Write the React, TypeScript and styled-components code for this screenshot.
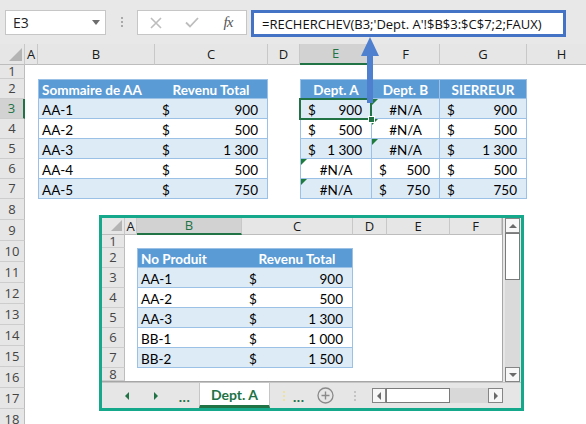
import { Fragment } from 'react';
import styled, { createGlobalStyle } from 'styled-components';

type Align = 'left' | 'center';
type Kind = 'head' | 'band' | 'plain';

interface CellSpec {
    value: string;
    kind: Kind;
    align: Align;
    first: boolean;
    last: boolean;
    sep: boolean;
    top: boolean;
    err?: boolean;
    selected?: boolean;
}

type CellMap = Record<string, CellSpec>;

const GREEN = '#217346';
const LINE = '1px solid #9bc2e6';
const UI_FONT = '"Open Sans", "Noto Sans", sans-serif';
const CELL_FONT = 'Lato, "Liberation Sans", sans-serif';

const GlobalStyle = createGlobalStyle`
html, body {
    margin: 0;
    padding: 0;
    background: #fff;
}
body {
    font-family: ${CELL_FONT};
}
`;

function buildTable(cols: string[], top: number, data: string[][], headAlign: Align[], sep: boolean): CellMap {
    const map: CellMap = {};
    data.forEach((row, i) => {
        row.forEach((value, j) => {
            map[cols[j] + (top + i)] = {
                value,
                kind: i === 0 ? 'head' : i % 2 === 1 ? 'band' : 'plain',
                align: i === 0 ? headAlign[j] : value === '#N/A' ? 'center' : 'left',
                first: j === 0,
                last: j === row.length - 1,
                sep,
                top: i === 0
            };
        });
    });
    return map;
}

const mainCells: CellMap = {
    ...buildTable(['B', 'C'], 2, [
        ['Sommaire de AA', 'Revenu Total'],
        ['AA-1', '$900'],
        ['AA-2', '$500'],
        ['AA-3', '$1 300'],
        ['AA-4', '$500'],
        ['AA-5', '$750']
    ], ['left', 'center'], false),
    ...buildTable(['E', 'F', 'G'], 2, [
        ['Dept. A', 'Dept. B', 'SIERREUR'],
        ['$900', '#N/A', '$900'],
        ['$500', '#N/A', '$500'],
        ['$1 300', '#N/A', '$1 300'],
        ['#N/A', '$500', '$500'],
        ['#N/A', '$750', '$750']
    ], ['center', 'center', 'center'], true)
};
['F3', 'F4', 'F5', 'E6', 'E7'].forEach(key => { mainCells[key].err = true; });
mainCells.E3.selected = true;

const innerCells: CellMap = buildTable(['B', 'C'], 2, [
    ['No Produit', 'Revenu Total'],
    ['AA-1', '$900'],
    ['AA-2', '$500'],
    ['AA-3', '$1 300'],
    ['BB-1', '$1 000'],
    ['BB-2', '$1 500']
], ['left', 'center'], false);

const rowsOf = (from: number, to: number, height: number): [number, number][] =>
    Array.from({ length: to - from + 1 }, (_, i) => [from + i, height]);

const MAIN_COLS: [string, number][] = [['A', 13], ['B', 117], ['C', 113], ['D', 32], ['E', 72], ['F', 68], ['G', 87], ['H', 70]];
const MAIN_ROWS: [number, number][] = [[1, 14], ...rowsOf(2, 7, 20), ...rowsOf(8, 18, 21)];
const INNER_COLS: [string, number][] = [['A', 12], ['B', 105], ['C', 111], ['D', 34], ['E', 63], ['F', 52]];
const INNER_ROWS: [number, number][] = [[1, 13], ...rowsOf(2, 7, 20), [8, 13]];

const Page = styled.div`
position: relative;
width: 586px;
height: 424px;
overflow: hidden;
background: #fff;
`;

/* ---------- formula bar ---------- */

const Toolbar = styled.div`
height: 44px;
box-sizing: border-box;
background: #e8e8e8;
display: flex;
align-items: flex-start;
padding: 10px 0 0 5px;
`;

const NameBox = styled.div`
width: 101px;
height: 25px;
box-sizing: border-box;
background: #fff;
border: 1px solid #c6c6c6;
display: flex;
align-items: center;
justify-content: space-between;
padding: 0 5px 0 7px;
font: 14px ${UI_FONT};
color: #222;
`;

const Caret = styled.span`
width: 0;
height: 0;
border-left: 4px solid transparent;
border-right: 4px solid transparent;
border-top: 5px solid #6d6d6d;
`;

const Grip = styled.span<{ $color?: string }>`
width: 0;
height: 10px;
border-left: 2px dotted ${props => props.$color ?? '#a9a9a9'};
`;

const ToolbarGrip = styled(Grip)`
margin: 7px 14px 0 15px;
`;

const FxBox = styled.div`
width: 110px;
height: 25px;
box-sizing: border-box;
background: #fff;
border: 1px solid #c6c6c6;
display: flex;
align-items: center;
`;

const FxSlot = styled.span`
width: 36px;
display: flex;
justify-content: center;
align-items: center;
`;

const FxLabel = styled.span`
font: italic 15px "Liberation Serif", serif;
color: #555;
letter-spacing: -1px;
`;

const FormulaInput = styled.div`
margin-left: 4px;
width: 315px;
height: 27px;
box-sizing: border-box;
background: #fff;
border: 3px solid #4472c4;
display: flex;
align-items: center;
padding-left: 8px;
font: 13px ${UI_FONT};
color: #111;
white-space: nowrap;
`;

/* ---------- sheet grid ---------- */

const SheetGrid = styled.div<{ $cols: string; $rows: string; $framed?: boolean }>`
display: grid;
grid-template-columns: ${props => props.$cols};
grid-template-rows: ${props => props.$rows};
background: #fff;
overflow: hidden;
border-right: ${props => props.$framed ? '1px solid #a6a6a6' : 'none'};
border-bottom: ${props => props.$framed ? '1px solid #a6a6a6' : 'none'};
`;

const Corner = styled.div`
box-sizing: border-box;
background: #e6e6e6;
border-right: 1px solid #c8c8c8;
border-bottom: 1px solid #bdbdbd;
display: flex;
align-items: flex-end;
justify-content: flex-end;
padding: 0 2px 3px 0;
`;

const CornerMark = styled.span<{ $size: number }>`
width: 0;
height: 0;
border-left: ${props => props.$size}px solid transparent;
border-bottom: ${props => props.$size}px solid #b4b4b4;
`;

const ColHead = styled.div<{ $active: boolean }>`
box-sizing: border-box;
display: flex;
align-items: center;
justify-content: center;
background: ${props => props.$active ? '#d2d2d2' : '#e6e6e6'};
border-right: 1px solid #c8c8c8;
border-bottom: ${props => props.$active ? `2px solid ${GREEN}` : '1px solid #bdbdbd'};
color: ${props => props.$active ? GREEN : '#1a1a1a'};
font: 13px/1 ${UI_FONT};
`;

const RowHead = styled.div<{ $active: boolean }>`
box-sizing: border-box;
display: flex;
align-items: center;
justify-content: center;
background: ${props => props.$active ? '#d2d2d2' : '#e6e6e6'};
border-bottom: 1px solid #cdcdcd;
border-right: ${props => props.$active ? `2px solid ${GREEN}` : '1px solid #bdbdbd'};
color: ${props => props.$active ? GREEN : '#444'};
font: 13px/1 ${UI_FONT};
`;

const Blank = styled.div`
background: #fff;
`;

const TableCell = styled.div<{ $kind: Kind; $align: Align; $first: boolean; $last: boolean; $sep: boolean; $top: boolean }>`
position: relative;
box-sizing: border-box;
display: flex;
align-items: center;
justify-content: ${props => props.$align === 'center' ? 'center' : 'flex-start'};
padding: 2px 3px 0;
min-width: 0;
white-space: nowrap;
font-size: 13.5px;
font-weight: ${props => props.$kind === 'head' ? 700 : 400};
color: ${props => props.$kind === 'head' ? '#fff' : '#000'};
background: ${props => props.$kind === 'head' ? '#5b9bd5' : props.$kind === 'band' ? '#ddebf7' : '#fff'};
border-bottom: ${LINE};
border-top: ${props => props.$top ? LINE : 'none'};
border-left: ${props => props.$first ? LINE : 'none'};
border-right: ${props => props.$last || props.$sep ? LINE : 'none'};
`;

const Money = styled.span`
flex: 1;
display: flex;
justify-content: space-between;
padding: 0 6px 0 4px;
`;

const ErrorMark = styled.span`
position: absolute;
left: 0;
top: 0;
width: 0;
height: 0;
border-top: 6px solid #1e7b3c;
border-right: 6px solid transparent;
`;

const Selection = styled.span`
position: absolute;
left: -2px;
top: -1px;
right: -1px;
bottom: -2px;
border: 2px solid ${GREEN};
z-index: 2;
pointer-events: none;
`;

const FillHandle = styled.span`
position: absolute;
right: -5px;
bottom: -5px;
width: 5px;
height: 5px;
background: ${GREEN};
border: 1px solid #fff;
`;

/* ---------- arrow ---------- */

const Arrow = styled.svg`
position: absolute;
left: 360px;
top: 37px;
z-index: 3;
`;

/* ---------- embedded window ---------- */

const Window = styled.div`
position: absolute;
left: 99px;
top: 215px;
width: 425px;
height: 196px;
box-sizing: border-box;
border: 3px solid #15a88a;
background: #e6e6e6;
display: flex;
flex-direction: column;
overflow: hidden;
z-index: 4;
`;

const WindowBody = styled.div`
display: flex;
gap: 2px;
height: 164px;
`;

const VScroll = styled.div`
width: 15px;
display: flex;
flex-direction: column;
background: #dadada;
`;

const ScrollButton = styled.span<{ $w?: number; $h?: number }>`
box-sizing: border-box;
width: ${props => props.$w ?? 15}px;
height: ${props => props.$h ?? 15}px;
flex: none;
background: #f7f7f7;
border: 1px solid #858585;
display: flex;
align-items: center;
justify-content: center;
`;

const Thumb = styled.span<{ $w?: number; $h?: number }>`
box-sizing: border-box;
width: ${props => props.$w ? `${props.$w}px` : '100%'};
height: ${props => props.$h ? `${props.$h}px` : '100%'};
flex: none;
background: #fff;
border: 1px solid #7a7a7a;
`;

const Track = styled.span`
flex: 1;
`;

const Tri = styled.span<{ $dir: 'up' | 'down' | 'left' | 'right'; $color?: string; $size?: number }>`
width: 0;
height: 0;
${props => {
        const s = props.$size ?? 4;
        const c = props.$color ?? '#6a6a6a';
        switch (props.$dir) {
        case 'up': return `border-left: ${s}px solid transparent; border-right: ${s}px solid transparent; border-bottom: ${s}px solid ${c};`;
        case 'down': return `border-left: ${s}px solid transparent; border-right: ${s}px solid transparent; border-top: ${s}px solid ${c};`;
        case 'left': return `border-top: ${s}px solid transparent; border-bottom: ${s}px solid transparent; border-right: ${s}px solid ${c};`;
        default: return `border-top: ${s}px solid transparent; border-bottom: ${s}px solid transparent; border-left: ${s}px solid ${c};`;
        }
    }}
`;

const TabBar = styled.div`
flex: 1;
display: flex;
align-items: center;
padding-left: 10px;
border-top: 1px solid #c6c6c6;
`;

const NavSlot = styled.span`
width: 29px;
display: flex;
justify-content: center;
align-items: center;
`;

const More = styled.span`
font: 700 14px ${CELL_FONT};
color: ${GREEN};
letter-spacing: 0.5px;
line-height: 1;
padding-top: 3px;
`;

const SheetTab = styled.span`
align-self: stretch;
width: 71px;
box-sizing: border-box;
background: #fff;
border-left: 1px solid #c6c6c6;
border-right: 1px solid #c6c6c6;
border-bottom: 3px solid ${GREEN};
display: flex;
align-items: center;
justify-content: center;
font: 700 14px ${CELL_FONT};
color: ${GREEN};
`;

const Spaced = styled.span<{ $left: number }>`
margin-left: ${props => props.$left}px;
display: flex;
align-items: center;
`;

const HScroll = styled.div`
margin-left: 16px;
width: 131px;
height: 15px;
display: flex;
background: #d8d8d8;
`;

function CellView({ spec }: { spec: CellSpec }) {
    const content = spec.value.startsWith('$')
        ? <Money><span>$</span><span>{spec.value.slice(1)}</span></Money>
        : spec.value;
    return (
        <TableCell $kind={spec.kind} $align={spec.align} $first={spec.first} $last={spec.last} $sep={spec.sep} $top={spec.top}>
            {content}
            {spec.err && <ErrorMark/>}
            {spec.selected && <Selection><FillHandle/></Selection>}
        </TableCell>
    );
}

function Sheet({
    cols, rows, cells, corner, headHeight, activeCol, activeRow, framed
}: {
    cols: [string, number][],
    rows: [number, number][],
    cells: CellMap,
    corner: number,
    headHeight: number,
    activeCol?: string,
    activeRow?: number,
    framed?: boolean
}) {
    const colTemplate = [corner, ...cols.map(c => c[1])].map(w => `${w}px`).join(' ');
    const rowTemplate = [headHeight, ...rows.map(r => r[1])].map(h => `${h}px`).join(' ');

    return (
        <SheetGrid $cols={colTemplate} $rows={rowTemplate} $framed={framed}>
            <Corner><CornerMark $size={corner > 24 ? 13 : 11}/></Corner>
            {cols.map(([c]) => <ColHead key={c} $active={c === activeCol}>{c}</ColHead>)}
            {rows.map(([r]) => (
                <Fragment key={r}>
                    <RowHead $active={r === activeRow}>{r}</RowHead>
                    {cols.map(([c]) => {
                        const spec = cells[c + r];
                        return spec ? <CellView key={c} spec={spec}/> : <Blank key={c}/>;
                    })}
                </Fragment>
            ))}
        </SheetGrid>
    );
}

function FormulaBar() {
    return (
        <Toolbar>
            <NameBox>E3<Caret/></NameBox>
            <ToolbarGrip/>
            <FxBox>
                <FxSlot>
                    <svg width="12" height="12" viewBox="0 0 12 12">
                        <path d="M1 1 L11 11 M11 1 L1 11" stroke="#bdbdbd" strokeWidth="1.6"/>
                    </svg>
                </FxSlot>
                <FxSlot>
                    <svg width="14" height="11" viewBox="0 0 14 11">
                        <path d="M1 5.5 L5 9.5 L13 1" stroke="#bdbdbd" strokeWidth="1.8" fill="none"/>
                    </svg>
                </FxSlot>
                <FxSlot><FxLabel>fx</FxLabel></FxSlot>
            </FxBox>
            <FormulaInput>=RECHERCHEV(B3;'Dept. A'!$B$3:$C$7;2;FAUX)</FormulaInput>
        </Toolbar>
    );
}

function Workbook() {
    return (
        <Window>
            <WindowBody>
                <Sheet cols={INNER_COLS} rows={INNER_ROWS} cells={innerCells} corner={23} headHeight={17} activeCol="B" framed/>
                <VScroll>
                    <ScrollButton><Tri $dir="up"/></ScrollButton>
                    <Thumb $h={47}/>
                    <Track/>
                    <ScrollButton><Tri $dir="down"/></ScrollButton>
                </VScroll>
            </WindowBody>
            <TabBar>
                <NavSlot><Tri $dir="left" $color={GREEN} $size={4}/></NavSlot>
                <NavSlot><Tri $dir="right" $color={GREEN} $size={4}/></NavSlot>
                <NavSlot><More>...</More></NavSlot>
                <SheetTab>Dept. A</SheetTab>
                <Spaced $left={13}><Grip $color="#ece2a4"/></Spaced>
                <Spaced $left={8}><More>...</More></Spaced>
                <Spaced $left={13}>
                    <svg width="17" height="17" viewBox="0 0 17 17">
                        <circle cx="8.5" cy="8.5" r="7.5" stroke="#8a8a8a" strokeWidth="1.3" fill="none"/>
                        <path d="M8.5 4.5 V12.5 M4.5 8.5 H12.5" stroke="#8a8a8a" strokeWidth="1.4"/>
                    </svg>
                </Spaced>
                <Spaced $left={20}><Grip $color="#c4c4c4"/></Spaced>
                <HScroll>
                    <ScrollButton $w={14}><Tri $dir="left"/></ScrollButton>
                    <Thumb $w={64}/>
                    <Track/>
                    <ScrollButton><Tri $dir="right"/></ScrollButton>
                </HScroll>
            </TabBar>
        </Window>
    );
}

export default function App() {
    return (
        <>
            <GlobalStyle/>
            <Page>
                <FormulaBar/>
                <Sheet cols={MAIN_COLS} rows={MAIN_ROWS} cells={mainCells} corner={25} headHeight={21} activeCol="E" activeRow={3}/>
                <Arrow width="20" height="68" viewBox="0 0 20 68">
                    <polygon points="10,0 19,19 1,19" fill="#4f7fcf"/>
                    <rect x="7" y="18" width="6" height="48" fill="#4f7fcf"/>
                </Arrow>
                <Workbook/>
            </Page>
        </>
    );
}
